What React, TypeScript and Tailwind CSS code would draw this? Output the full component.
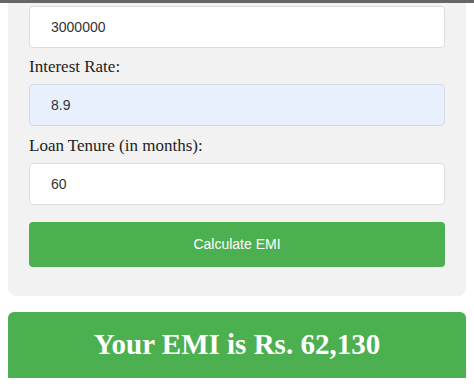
const sans = "font-['Liberation_Sans',Arial,sans-serif]";

function Field({ value, filled }: { value: string; filled?: boolean }) {
  return (
    <input
      readOnly
      value={value}
      className={`block w-full h-[42px] border rounded-[4px] pl-[21px] text-[14px] text-[#333] outline-none ${sans} ${
        filled ? "bg-[#e8f0fe] border-[#d4dbe6]" : "bg-white border-[#dcdcdc]"
      }`}
    />
  );
}

function Label({ children, top }: { children: string; top: string }) {
  return (
    <label
      className={`block mb-[7px] text-[17px] leading-[20px] text-[#222] font-['Liberation_Serif','Times_New_Roman',serif] ${top}`}
    >
      {children}
    </label>
  );
}

export default function App() {
  return (
    <div className="w-[474px] h-[384px] overflow-hidden bg-white">
      <div className="h-[3px] bg-[#666]" />
      <div className="mx-[8px] bg-[#f2f2f2] rounded-b-[8px] px-[21px] pt-[3px] pb-[29px]">
        <Field value="3000000" />
        <Label top="mt-[9px]">Interest Rate:</Label>
        <Field value="8.9" filled />
        <Label top="mt-[10px]">Loan Tenure (in months):</Label>
        <Field value="60" />
        <button
          className={`block w-full h-[45px] mt-[17px] bg-[#4caf50] rounded-[4px] text-white text-[14px] ${sans}`}
        >
          Calculate EMI
        </button>
      </div>
      <div className="mx-[8px] mt-[16px] h-[66px] bg-[#4caf50] rounded-t-[6px] flex items-center justify-center">
        <h2 className="text-white font-bold text-[29px] font-['Liberation_Serif','Times_New_Roman',serif]">
          Your EMI is Rs. 62,130
        </h2>
      </div>
    </div>
  );
}
